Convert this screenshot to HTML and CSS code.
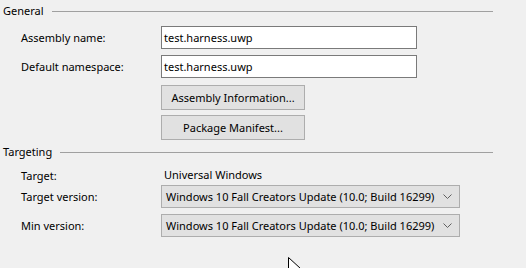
FILE: index.html
```html
<!DOCTYPE html>
<html>
<head>
<meta charset="utf-8">
<link rel="stylesheet" href="styles.css">
</head>
<body>
<div class="page">
  <div class="group-head general">
    <span class="group-title">General</span>
    <span class="group-line"></span>
  </div>
  <div class="row r-name">
    <div class="label">Assembly name:</div>
    <div class="textbox">test.harness.uwp</div>
  </div>
  <div class="row r-ns">
    <div class="label">Default namespace:</div>
    <div class="textbox">test.harness.uwp</div>
  </div>
  <div class="row r-btn1">
    <div></div>
    <div class="button">Assembly Information...</div>
  </div>
  <div class="row r-btn2">
    <div></div>
    <div class="button">Package Manifest...</div>
  </div>
  <div class="group-head targeting">
    <span class="group-title">Targeting</span>
    <span class="group-line"></span>
  </div>
  <div class="row r-target">
    <div class="label">Target:</div>
    <div class="value">Universal Windows</div>
  </div>
  <div class="row r-tv">
    <div class="label">Target version:</div>
    <div class="combo"><span>Windows 10 Fall Creators Update (10.0; Build 16299)</span><svg class="chev" width="9" height="5" viewBox="0 0 9 5"><path d="M0.5 0.5 L4.5 4.5 L8.5 0.5" fill="none" stroke="#606060" stroke-width="1"/></svg></div>
  </div>
  <div class="row r-mv">
    <div class="label">Min version:</div>
    <div class="combo"><span>Windows 10 Fall Creators Update (10.0; Build 16299)</span><svg class="chev" width="9" height="5" viewBox="0 0 9 5"><path d="M0.5 0.5 L4.5 4.5 L8.5 0.5" fill="none" stroke="#606060" stroke-width="1"/></svg></div>
  </div>
  <svg class="cursor" width="14" height="22" viewBox="0 0 14 22"><path d="M0.5 0.5 L0.5 16.5 L4.5 12.5 L7.5 19.5 L10 18.5 L7 11.5 L12.5 11.5 Z" fill="#ffffff" stroke="#000000" stroke-width="1"/></svg>
</div>
</body>
</html>
```
FILE: styles.css
```css
html, body {
  margin: 0;
  padding: 0;
  background: #f0f0f0;
}
body {
  font-family: "Segoe UI", "Noto Sans", "Open Sans", sans-serif;
  font-size: 11px;
  color: #000;
  width: 526px;
  height: 268px;
  overflow: hidden;
}
.page {
  position: relative;
  width: 526px;
  height: 268px;
  display: flex;
  flex-direction: column;
}
.group-head {
  display: flex;
  align-items: center;
  width: 490px;
  padding-left: 3px;
  height: 16px;
  flex: none;
}
.general {
  margin-top: 3px;
}
.targeting {
  margin-top: 4px;
}
.group-title {
  line-height: 16px;
  white-space: nowrap;
}
.group-line {
  flex: 1;
  height: 1px;
  background: #a0a0a0;
  margin-left: 8px;
}
.row {
  display: grid;
  grid-template-columns: 140px auto;
  justify-content: start;
  align-items: center;
  padding-left: 21px;
  flex: none;
}
.r-name { margin-top: 7px; }
.r-ns { margin-top: 6px; }
.r-btn1 { margin-top: 7px; }
.r-btn2 { margin-top: 5px; }
.r-target { margin-top: 7px; height: 16px; }
.r-tv { margin-top: 2px; }
.r-mv { margin-top: 6px; }
.label {
  white-space: nowrap;
}
.textbox {
  width: 252px;
  height: 21px;
  border: 1px solid #7a7a7a;
  background: #fff;
  padding-left: 2px;
  line-height: 21px;
}
.button {
  width: 142px;
  height: 23px;
  border: 1px solid #adadad;
  background: #e1e1e1;
  text-align: center;
  line-height: 23px;
}
.value {
  padding-left: 3px;
  line-height: 16px;
}
.combo {
  width: 293px;
  height: 21px;
  border: 1px solid #adadad;
  background: #e1e1e1;
  display: flex;
  align-items: center;
  padding-left: 4px;
  line-height: 21px;
}
.combo span {
  flex: 1;
  white-space: nowrap;
}
.chev {
  flex: none;
  margin-right: 7px;
  display: block;
}
.cursor {
  position: absolute;
  left: 288px;
  top: 257px;
}
```
